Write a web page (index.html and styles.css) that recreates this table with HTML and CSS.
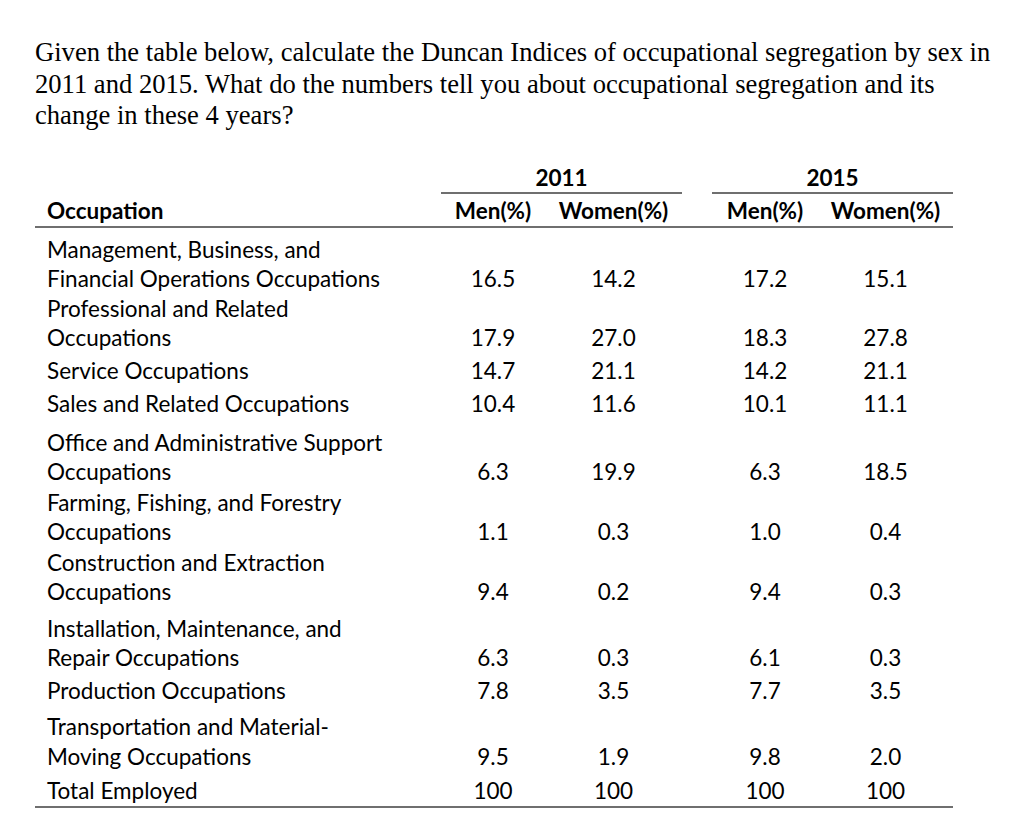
FILE: index.html
```html
<!DOCTYPE html>
<html lang="en">
<head>
<meta charset="utf-8">
<title>Duncan Index question</title>
<link rel="stylesheet" href="styles.css">
</head>
<body>
<main class="page">
  <p class="question">Given the table below, calculate the Duncan Indices of occupational segregation by sex in 2011 and 2015. What do the numbers tell you about occupational segregation and its change in these 4 years?</p>

  <table class="data">
    <colgroup>
      <col class="c-occ">
      <col class="c-men">
      <col class="c-women">
      <col class="c-gap">
      <col class="c-men2">
      <col class="c-women2">
    </colgroup>
    <thead>
      <tr class="years">
        <th></th>
        <th colspan="2" class="year">2011</th>
        <th></th>
        <th colspan="2" class="year">2015</th>
      </tr>
      <tr class="labels">
        <th class="occ">Occupation</th>
        <th>Men(%)</th>
        <th>Women(%)</th>
        <th></th>
        <th>Men(%)</th>
        <th>Women(%)</th>
      </tr>
    </thead>
    <tbody>
      <tr class="gap-7">
        <td class="occ">Management, Business, and<br>Financial Operations Occupations</td>
        <td>16.5</td><td>14.2</td><td></td><td>17.2</td><td>15.1</td>
      </tr>
      <tr class="gap-0">
        <td class="occ">Professional and Related<br>Occupations</td>
        <td>17.9</td><td>27.0</td><td></td><td>18.3</td><td>27.8</td>
      </tr>
      <tr class="gap-3">
        <td class="occ">Service Occupations</td>
        <td>14.7</td><td>21.1</td><td></td><td>14.2</td><td>21.1</td>
      </tr>
      <tr class="gap-4">
        <td class="occ">Sales and Related Occupations</td>
        <td>10.4</td><td>11.6</td><td></td><td>10.1</td><td>11.1</td>
      </tr>
      <tr class="gap-9">
        <td class="occ">Office and Administrative Support<br>Occupations</td>
        <td>6.3</td><td>19.9</td><td></td><td>6.3</td><td>18.5</td>
      </tr>
      <tr class="gap-1">
        <td class="occ">Farming, Fishing, and Forestry<br>Occupations</td>
        <td>1.1</td><td>0.3</td><td></td><td>1.0</td><td>0.4</td>
      </tr>
      <tr class="gap-1">
        <td class="occ">Construction and Extraction<br>Occupations</td>
        <td>9.4</td><td>0.2</td><td></td><td>9.4</td><td>0.3</td>
      </tr>
      <tr class="gap-7">
        <td class="occ">Installation, Maintenance, and<br>Repair Occupations</td>
        <td>6.3</td><td>0.3</td><td></td><td>6.1</td><td>0.3</td>
      </tr>
      <tr class="gap-3">
        <td class="occ">Production Occupations</td>
        <td>7.8</td><td>3.5</td><td></td><td>7.7</td><td>3.5</td>
      </tr>
      <tr class="gap-7">
        <td class="occ">Transportation and Material-<br>Moving Occupations</td>
        <td>9.5</td><td>1.9</td><td></td><td>9.8</td><td>2.0</td>
      </tr>
      <tr class="gap-5 total">
        <td class="occ">Total Employed</td>
        <td>100</td><td>100</td><td></td><td>100</td><td>100</td>
      </tr>
    </tbody>
  </table>
</main>
</body>
</html>
```

FILE: styles.css
```css
html, body {
  margin: 0;
  padding: 0;
  background: #ffffff;
  color: #000000;
}

.page {
  padding: 37px 14px 0 35px;
}

.question {
  margin: 0;
  font-family: "Liberation Serif", "Times New Roman", serif;
  font-size: 26.6px;
  line-height: 31.5px;
  color: #000;
}

.data {
  margin-top: 32px;
  border-collapse: separate;
  border-spacing: 0;
  table-layout: fixed;
  width: 918px;
  font-family: Lato, "Open Sans", sans-serif;
  font-size: 22.5px;
  color: #000;
}

.c-occ { width: 406px; }
.c-men { width: 104px; }
.c-women { width: 137px; }
.c-gap { width: 30px; }
.c-men2 { width: 106px; }
.c-women2 { width: 135px; }

.data th,
.data td {
  padding: 0;
  text-align: center;
  vertical-align: bottom;
  line-height: 29.5px;
  white-space: nowrap;
}

.data th {
  font-weight: 700;
}

.data .occ {
  text-align: left;
  padding-left: 12px;
}

.years th {
  line-height: 28px;
}

.years .year {
  border-bottom: 2px solid #6f6f6f;
}

.labels th {
  padding-top: 2px;
  line-height: 30px;
  border-bottom: 2px solid #6f6f6f;
}

.gap-0 td { padding-top: 0; }
.gap-1 td { padding-top: 1px; }
.gap-3 td { padding-top: 3px; }
.gap-4 td { padding-top: 4px; }
.gap-5 td { padding-top: 5px; }
.gap-7 td { padding-top: 7px; }
.gap-9 td { padding-top: 9px; }

.total td {
  border-bottom: 2px solid #6f6f6f;
}
```
